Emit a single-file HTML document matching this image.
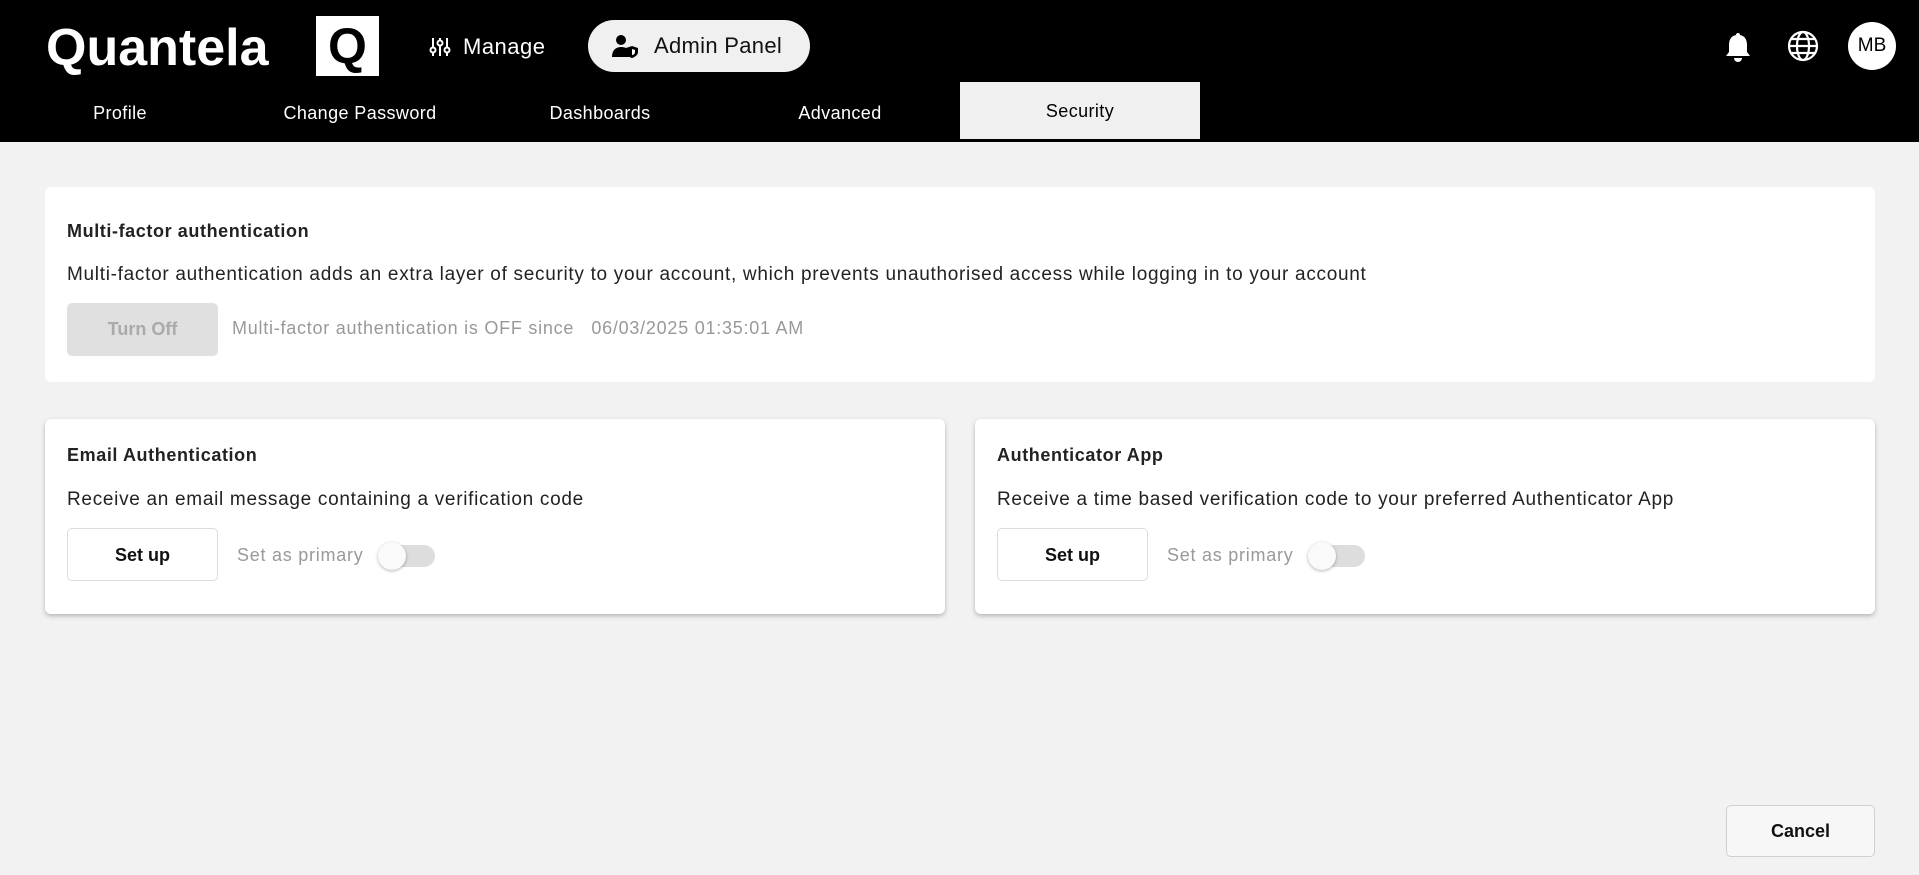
<!DOCTYPE html>
<html><head><meta charset="utf-8"><style>
*{box-sizing:border-box;margin:0;padding:0}
body{width:1919px;height:875px;background:#f2f2f2;font-family:"Liberation Sans",sans-serif;color:#222;position:relative;overflow:hidden}
.hdr{position:absolute;left:0;top:0;width:1919px;height:142px;background:#000}
.abs{position:absolute}
.logo{left:46px;top:18px;font-size:52px;font-weight:bold;color:#fff}
.qbox{left:316px;top:16px;width:63px;height:60px;background:#fff;color:#000;font-size:50px;font-weight:bold;text-align:center;line-height:60px;overflow:hidden}
.manage{left:429px;top:34px;color:#fff;font-size:22px;display:flex;align-items:center;gap:12px;letter-spacing:.5px}
.pill{left:588px;top:20px;width:222px;height:52px;border-radius:26px;background:#f0f0f0;color:#111;font-size:22px;display:flex;align-items:center;padding-left:24px;gap:14px;letter-spacing:.3px}
.tab{top:82px;height:57px;width:240px;color:#fff;font-size:18px;text-align:center;line-height:62px;letter-spacing:.4px}
.tab.sel{background:#f0f0f0;color:#000;line-height:59px}
.av{left:1848px;top:22px;width:48px;height:48px;border-radius:50%;background:#fff;color:#000;font-size:19px;text-align:center;line-height:48px}
.card{position:absolute;background:#fff;border-radius:6px}
.sh{box-shadow:0 2px 5px rgba(0,0,0,.25)}
.t{position:absolute;left:22px;font-size:18px;font-weight:bold;color:#222;letter-spacing:.6px}
.d{position:absolute;left:22px;font-size:19px;color:#222;letter-spacing:.7px}
.btn{position:absolute;left:22px;width:151px;height:53px;border-radius:5px;font-size:18px;font-weight:bold;text-align:center;line-height:53px}
.g{color:#999;font-size:18px;position:absolute;letter-spacing:.75px}
.tg{position:absolute;width:54px;height:22px;border-radius:11px;background:#ddd}
.tg:before{content:"";position:absolute;left:-3px;top:-3px;width:28px;height:28px;border-radius:50%;background:#fafafa;box-shadow:0 1px 3px rgba(0,0,0,.3)}
</style></head><body>
<div class="hdr"></div>
<div class="abs logo">Quantela</div>
<div class="abs qbox">Q</div>
<div class="abs manage"><svg width="22" height="22" viewBox="0 0 22 22" fill="none" stroke="#fff" stroke-width="2"><path d="M4 2v18M11 2v18M18 2v18"/><circle cx="4" cy="14" r="2.5" fill="#000"/><circle cx="11" cy="7" r="2.5" fill="#000"/><circle cx="18" cy="14" r="2.5" fill="#000"/></svg>Manage</div>
<div class="abs pill"><svg width="28" height="26" viewBox="0 0 28 26"><circle cx="9" cy="7" r="5" fill="#000"/><path d="M0 24c0-7 4-10 9-10s7 2 8 4v6z" fill="#000"/><path d="M20 13l6 2v4c0 3-3 5-6 6-3-1-6-3-6-6v-4z" fill="#000"/><path d="M20 16l3 1v2c0 2-2 3-3 3z" fill="#fff"/></svg>Admin Panel</div>
<div class="abs tab" style="left:0">Profile</div>
<div class="abs tab" style="left:240px">Change Password</div>
<div class="abs tab" style="left:480px">Dashboards</div>
<div class="abs tab" style="left:720px">Advanced</div>
<div class="abs tab sel" style="left:960px">Security</div>
<svg class="abs" style="left:1724px;top:31px" width="28" height="32" viewBox="0 0 28 32"><path d="M14 2c-1.5 0-2 1-2 2C7 5 5 9 5 14v7l-3 4h24l-3-4v-7c0-5-2-9-7-10 0-1-.5-2-2-2z" fill="#fff"/><path d="M10 27a4 4 0 0 0 8 0z" fill="#fff"/></svg>
<svg class="abs" style="left:1787px;top:30px" width="32" height="32" viewBox="0 0 32 32" fill="none" stroke="#fff" stroke-width="2.2"><circle cx="16" cy="16" r="14"/><ellipse cx="16" cy="16" rx="6" ry="14"/><path d="M2 16h28M4 9h24M4 23h24"/></svg>
<div class="abs av">MB</div>

<div class="card" style="left:45px;top:187px;width:1830px;height:195px">
<div class="t" style="top:34px">Multi-factor authentication</div>
<div class="d" style="top:77px">Multi-factor authentication adds an extra layer of security to your account, which prevents unauthorised access while logging in to your account</div>
<div class="btn" style="top:116px;background:#e0e0e0;color:#aaa">Turn Off</div>
<div class="g" style="left:187px;top:131px">Multi-factor authentication is OFF since &nbsp; 06/03/2025 01:35:01 AM</div>
</div>

<div class="card sh" style="left:45px;top:419px;width:900px;height:195px">
<div class="t" style="top:26px">Email Authentication</div>
<div class="d" style="top:70px">Receive an email message containing a verification code</div>
<div class="btn" style="top:109px;border:1px solid #ddd;color:#111">Set up</div>
<div class="g" style="left:192px;top:126px">Set as primary</div>
<div class="tg" style="left:336px;top:126px"></div>
</div>
<div class="card sh" style="left:975px;top:419px;width:900px;height:195px">
<div class="t" style="top:26px">Authenticator App</div>
<div class="d" style="top:70px">Receive a time based verification code to your preferred Authenticator App</div>
<div class="btn" style="top:109px;border:1px solid #ddd;color:#111">Set up</div>
<div class="g" style="left:192px;top:126px">Set as primary</div>
<div class="tg" style="left:336px;top:126px"></div>
</div>

<div class="abs" style="left:1726px;top:805px;width:149px;height:52px;border:1px solid #d0d0d0;border-radius:5px;background:#f7f7f7;font-size:18px;font-weight:bold;text-align:center;line-height:50px;color:#111">Cancel</div>
</body></html>
